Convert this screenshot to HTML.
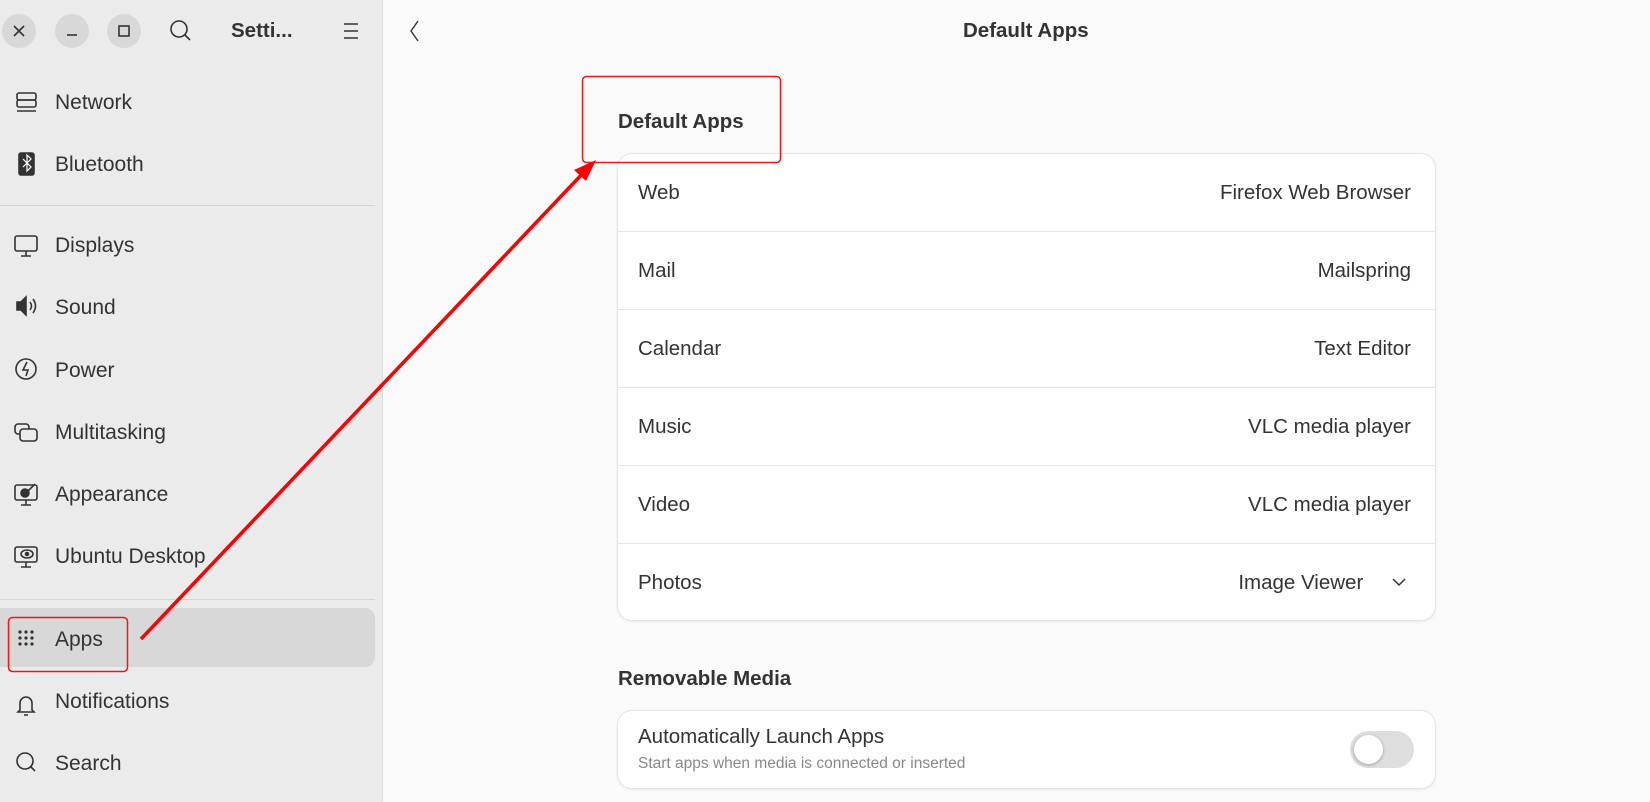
<!DOCTYPE html>
<html><head><meta charset="utf-8"><style>
*{margin:0;padding:0;box-sizing:border-box}
body{width:1650px;height:802px;overflow:hidden;background:#fafafa;font-family:"Liberation Sans","DejaVu Sans",sans-serif;color:#333;position:relative}
.side{position:absolute;left:0;top:0;width:383px;height:802px;background:#ebebeb;border-right:1px solid #dcdcdc}
.cb{position:absolute;top:14px;width:34px;height:34px;border-radius:50%;background:#d8d8d8}
.item{position:absolute;left:55px;font-size:21px;color:#333;transform:translateY(-50%);margin-top:2px}
.sep{position:absolute;left:0;width:375px;height:1px;background:#d6d6d6}
.card{position:absolute;left:618px;width:817px;background:#fff;border-radius:14px;box-shadow:0 0 0 1px #e6e6e6,0 1px 3px rgba(0,0,0,.12)}
.row{height:78px;display:flex;align-items:center;justify-content:space-between;padding:0 24px 0 20px;font-size:20.5px;border-bottom:1px solid #e6e6e6}
.row:last-child{border-bottom:none}
.h{position:absolute;font-size:20.5px;font-weight:bold;color:#333}
</style></head><body>
<div class="side">
 <div class="cb" style="left:2px"></div><div class="cb" style="left:55px"></div><div class="cb" style="left:107px"></div>
 <svg style="position:absolute;left:0;top:0" width="383" height="60">
  <path d="M14 26l10 10M24 26l-10 10" stroke="#333" stroke-width="1.6"/>
  <path d="M67 35h10" stroke="#333" stroke-width="1.6"/>
  <rect x="119" y="26" width="10" height="10" fill="none" stroke="#333" stroke-width="1.6"/>
  <circle cx="179" cy="29" r="8" fill="none" stroke="#333" stroke-width="1.6"/><path d="M185 35l5 5" stroke="#333" stroke-width="1.6"/>
  <path d="M344 24h14M344 31h14M344 38h14" stroke="#333" stroke-width="1.5"/>
 </svg>
 <div class="h" style="left:231px;top:19px">Setti...</div>
 <div class="sep" style="top:205px"></div>
 <div class="sep" style="top:599px"></div>
 <div style="position:absolute;left:0;top:608px;width:375px;height:59px;background:#d8d8d8;border-radius:0 10px 10px 0"></div>
 <svg style="position:absolute;left:0;top:0" width="40" height="802" fill="none" stroke="#333" stroke-width="1.6">
  <rect x="17" y="93" width="19" height="7" rx="2"/><rect x="17" y="100" width="19" height="7" rx="2"/><path d="M17 111h19"/>
  <rect x="19" y="153" width="15" height="22" rx="2" fill="#333"/><path d="M23 159l8 8-4 4v-16l4 4-8 8" stroke="#fff" stroke-width="1.2"/>
  <rect x="15" y="236" width="22" height="15" rx="2"/><path d="M21 256h10M26 251v5"/>
  <path d="M17 302h4l5-5v18l-5-5h-4z" fill="#333"/><path d="M30 302q3 4 0 8M33 299q5 7 0 14"/>
  <circle cx="26" cy="369" r="10"/><path d="M27 362l-4 8h5l-2 6" />
  <rect x="15" y="424" width="14" height="10" rx="3"/><rect x="20" y="429" width="17" height="12" rx="3" fill="#ebebeb"/>
  <rect x="15" y="485" width="22" height="15" rx="2"/><path d="M21 505h10M26 500v5"/><circle cx="25" cy="493" r="4" fill="#333"/><path d="M28 491l7-7"/>
  <rect x="15" y="547" width="22" height="15" rx="2"/><path d="M21 567h10M26 562v5"/><ellipse cx="27" cy="554" rx="6" ry="4"/><circle cx="27" cy="554" r="1.5" fill="#333"/>
  <path d="M20 710v-7a6 6 0 0112 0v7l2 2H18zM24 715h4"/>
  <circle cx="25" cy="761" r="8"/><path d="M31 767l4 4"/>
 </svg>
 <svg style="position:absolute;left:18px;top:630px" width="16" height="16" fill="#333">
  <circle cx="2" cy="2" r="1.6"/><circle cx="8" cy="2" r="1.6"/><circle cx="14" cy="2" r="1.6"/>
  <circle cx="2" cy="8" r="1.6"/><circle cx="8" cy="8" r="1.6"/><circle cx="14" cy="8" r="1.6"/>
  <circle cx="2" cy="14" r="1.6"/><circle cx="8" cy="14" r="1.6"/><circle cx="14" cy="14" r="1.6"/>
 </svg>
 <div class="item" style="top:101px">Network</div>
 <div class="item" style="top:163px">Bluetooth</div>
 <div class="item" style="top:244px">Displays</div>
 <div class="item" style="top:306px">Sound</div>
 <div class="item" style="top:369px">Power</div>
 <div class="item" style="top:431px">Multitasking</div>
 <div class="item" style="top:493px">Appearance</div>
 <div class="item" style="top:555px">Ubuntu Desktop</div>
 <div class="item" style="top:638px">Apps</div>
 <div class="item" style="top:700px">Notifications</div>
 <div class="item" style="top:762px">Search</div>
</div>
<svg style="position:absolute;left:408px;top:20px" width="14" height="22"><path d="M10 1L3 11l7 10" fill="none" stroke="#333" stroke-width="1.4"/></svg>
<div class="h" style="left:963px;top:19px">Default Apps</div>
<div class="h" style="left:618px;top:110px">Default Apps</div>
<div class="card" style="top:154px;height:466px">
 <div class="row"><span>Web</span><span>Firefox Web Browser</span></div>
 <div class="row"><span>Mail</span><span>Mailspring</span></div>
 <div class="row"><span>Calendar</span><span>Text Editor</span></div>
 <div class="row"><span>Music</span><span>VLC media player</span></div>
 <div class="row"><span>Video</span><span>VLC media player</span></div>
 <div class="row"><span>Photos</span><span>Image Viewer <svg width="40" height="14" style="margin-left:2px"><path d="M22 4l6 6 6-6" fill="none" stroke="#333" stroke-width="1.5"/></svg></span></div>
</div>
<div class="h" style="left:618px;top:667px">Removable Media</div>
<div class="card" style="top:711px;height:77px">
 <div style="position:absolute;left:20px;top:14px;font-size:20.5px">Automatically Launch Apps</div>
 <div style="position:absolute;left:20px;top:44px;font-size:15.5px;color:#888">Start apps when media is connected or inserted</div>
 <div style="position:absolute;left:732px;top:20px;width:64px;height:37px;border-radius:19px;background:#dedede"></div>
 <div style="position:absolute;left:736px;top:24px;width:29px;height:29px;border-radius:50%;background:#fff;box-shadow:0 1px 3px rgba(0,0,0,.3)"></div>
</div>
<svg style="position:absolute;left:0;top:0" width="1650" height="802">
 <rect x="582.5" y="76.5" width="198" height="86" rx="4" fill="none" stroke="#f01818" stroke-width="1.5"/>
 <rect x="8.5" y="617.5" width="119" height="54" rx="4" fill="none" stroke="#f01818" stroke-width="1.5"/>
 <path d="M141 639L585 171" stroke="#f00" stroke-width="3.5"/>
 <path d="M596 160l-22 10 12 11z" fill="#f00"/>
</svg>
</body></html>
